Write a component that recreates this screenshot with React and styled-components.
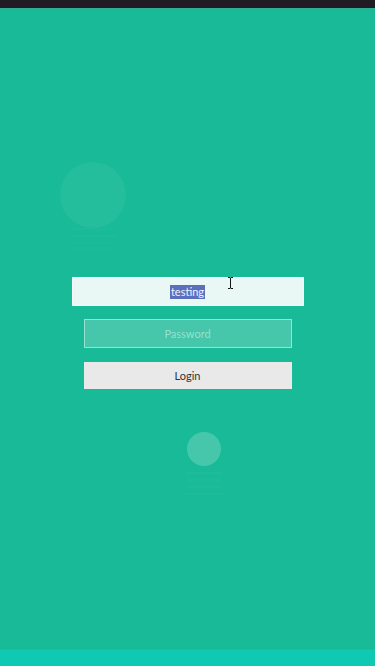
import React from "react";
import styled, { createGlobalStyle } from "styled-components";

const Global = createGlobalStyle`
  html, body { margin: 0; padding: 0; height: 100%; }
  body { background: #18ba97; font-family: Lato, "Open Sans", sans-serif; }
  #root { height: 100%; }
`;

const Page = styled.div`
  height: 666px;
  display: flex;
  flex-direction: column;
  overflow: hidden;
`;

const TopBar = styled.div`
  height: 8px;
  background: #211c24;
  border-bottom: 2px solid #2fae91;
`;

const Main = styled.main`
  position: relative;
  flex: 1;
  background: #18ba97;
  display: flex;
  flex-direction: column;
  align-items: center;
  padding-top: 267px;
  box-sizing: border-box;
`;

const Bottom = styled.div`
  height: 16px;
  background: #10c9b3;
  border-top: 1px solid #15c1a6;
`;

const Bubble = styled.div`
  position: absolute;
  left: ${(p) => p.$x}px;
  top: ${(p) => p.$y}px;
  width: ${(p) => p.$size}px;
  height: ${(p) => p.$size}px;
  border-radius: 50%;
  background: rgba(255, 255, 255, ${(p) => p.$alpha});
`;

const Trail = styled.div`
  position: absolute;
  left: ${(p) => p.$x}px;
  top: ${(p) => p.$y}px;
  width: ${(p) => p.$w}px;
  height: ${(p) => p.$h}px;
  background: repeating-linear-gradient(
    to bottom,
    rgba(255, 255, 255, ${(p) => p.$alpha}) 0 2px,
    transparent 2px 7px
  );
  -webkit-mask: linear-gradient(to bottom, #000, transparent);
  mask: linear-gradient(to bottom, #000, transparent);
`;

const Form = styled.form`
  position: relative;
  z-index: 1;
  display: flex;
  flex-direction: column;
  align-items: center;
`;

const UserField = styled.div`
  width: 232px;
  height: 29px;
  box-sizing: border-box;
  background: #e9f8f4;
  border: 1px solid rgba(255, 255, 255, 0.6);
  display: flex;
  align-items: center;
  justify-content: center;
  font-size: 11px;
  color: #18ba97;
  position: relative;
`;

const Selected = styled.span`
  background: #5b6fbf;
  color: #eef2ff;
  line-height: 14px;
  padding: 0 1px;
`;

const Cursor = styled.svg`
  position: absolute;
  left: 154px;
  top: -1px;
`;

const PassField = styled.div`
  margin-top: 13px;
  width: 208px;
  height: 29px;
  box-sizing: border-box;
  background: rgba(255, 255, 255, 0.2);
  border: 1px solid rgba(255, 255, 255, 0.45);
  display: flex;
  align-items: center;
  justify-content: center;
  font-size: 11px;
  color: rgba(255, 255, 255, 0.45);
`;

const LoginButton = styled.button`
  margin-top: 14px;
  width: 208px;
  height: 27px;
  border: 0;
  background: #e9e9e9;
  color: #333;
  font-family: Lato, "Open Sans", sans-serif;
  font-size: 11px;
  padding: 0;
`;

export default function App() {
  return (
    <>
      <Global />
      <Page>
        <TopBar />
        <Main>
          <Bubble $x={60} $y={152} $size={66} $alpha={0.06} />
          <Trail $x={70} $y={218} $w={46} $h={60} $alpha={0.025} />
          <Bubble $x={187} $y={422} $size={34} $alpha={0.2} />
          <Trail $x={186} $y={462} $w={36} $h={60} $alpha={0.03} />
          <Form onSubmit={(e) => e.preventDefault()}>
            <UserField>
              <Selected>testing</Selected>
              <Cursor width="7" height="12" viewBox="0 0 7 12">
                <path
                  d="M1 0.5h2l0.5 0.5 0.5-0.5h2M3.5 1v10M1 11.5h2l0.5-0.5 0.5 0.5h2"
                  stroke="#111"
                  strokeWidth="1"
                  fill="none"
                />
              </Cursor>
            </UserField>
            <PassField>Password</PassField>
            <LoginButton type="submit">Login</LoginButton>
          </Form>
        </Main>
        <Bottom />
      </Page>
    </>
  );
}
